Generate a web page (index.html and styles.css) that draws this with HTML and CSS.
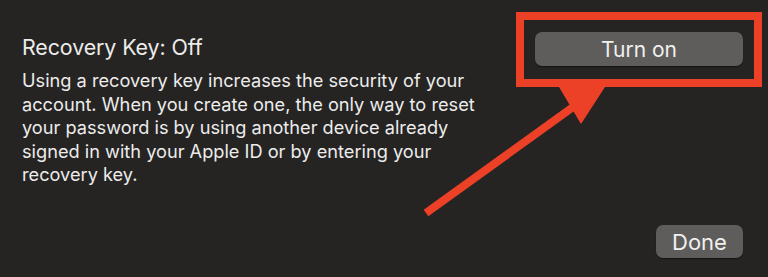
FILE: index.html
```html
<!DOCTYPE html>
<html>
<head>
<meta charset="utf-8">
<link rel="stylesheet" href="styles.css">
</head>
<body>
<div class="dialog">
  <div class="top">
    <div class="info">
      <h1 class="title">Recovery Key: Off</h1>
      <p class="desc">Using a recovery key increases the security of your account. When you create one, the only way to reset your password is by using another device already signed in with your Apple ID or by entering your recovery key.</p>
    </div>
    <div class="highlight">
      <button class="btn btn-wide">Turn on</button>
    </div>
  </div>
  <div class="footer">
    <button class="btn btn-done">Done</button>
  </div>
  <svg class="arrow" width="768" height="277" viewBox="0 0 768 277">
    <line x1="426" y1="213" x2="580" y2="102" stroke="#ec4127" stroke-width="8"/>
    <polygon points="559,87 605,87 581,124" fill="#ec4127"/>
  </svg>
</div>
</body>
</html>
```
FILE: styles.css
```css
* { box-sizing: border-box; }
html, body { margin: 0; padding: 0; background: #252423; }
.dialog {
  position: relative;
  display: flex;
  flex-direction: column;
  width: 768px;
  height: 277px;
  background: #252423;
  color: #ececeb;
  font-family: "Inter", "Liberation Sans", sans-serif;
  overflow: hidden;
}
.top {
  display: flex;
  align-items: flex-start;
  padding: 12px 6px 0 22px;
}
.info { width: 488px; }
.title {
  margin: 22px 0 0;
  font-size: 21.4px;
  font-weight: 400;
  line-height: 26px;
  letter-spacing: -0.1px;
}
.desc {
  margin: 9px 0 0;
  font-size: 18.2px;
  line-height: 23.5px;
  letter-spacing: 0;
}
.highlight {
  margin-left: auto;
  border: 8px solid #ec4127;
  padding: 12px 11px 13px;
}
.btn {
  display: flex;
  align-items: center;
  justify-content: center;
  border: none;
  border-radius: 7px;
  background: #5e5d5b;
  color: #f0f0ef;
  font-family: "Inter", "Liberation Sans", sans-serif;
  padding: 0;
  box-shadow: 0 1px 1px rgba(0,0,0,0.45);
}
.btn-wide { width: 208px; height: 34px; font-size: 21px; }
.footer {
  display: flex;
  justify-content: flex-end;
  margin-top: auto;
  padding: 0 25px 19px 0;
}
.btn-done { width: 87px; height: 33px; font-size: 22px; }
.arrow { position: absolute; left: 0; top: 0; pointer-events: none; }
```
